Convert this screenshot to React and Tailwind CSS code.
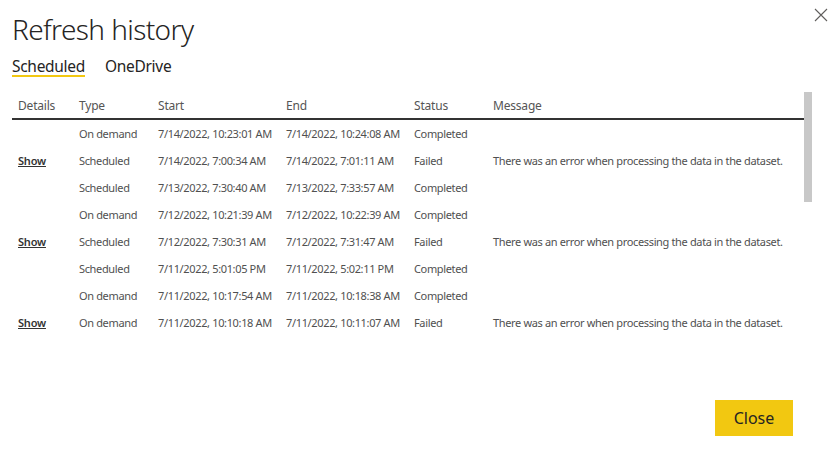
import React from "react";

const rows = [
  ["", "On demand", "7/14/2022, 10:23:01 AM", "7/14/2022, 10:24:08 AM", "Completed", ""],
  ["Show", "Scheduled", "7/14/2022, 7:00:34 AM", "7/14/2022, 7:01:11 AM", "Failed", "There was an error when processing the data in the dataset."],
  ["", "Scheduled", "7/13/2022, 7:30:40 AM", "7/13/2022, 7:33:57 AM", "Completed", ""],
  ["", "On demand", "7/12/2022, 10:21:39 AM", "7/12/2022, 10:22:39 AM", "Completed", ""],
  ["Show", "Scheduled", "7/12/2022, 7:30:31 AM", "7/12/2022, 7:31:47 AM", "Failed", "There was an error when processing the data in the dataset."],
  ["", "Scheduled", "7/11/2022, 5:01:05 PM", "7/11/2022, 5:02:11 PM", "Completed", ""],
  ["", "On demand", "7/11/2022, 10:17:54 AM", "7/11/2022, 10:18:38 AM", "Completed", ""],
  ["Show", "On demand", "7/11/2022, 10:10:18 AM", "7/11/2022, 10:11:07 AM", "Failed", "There was an error when processing the data in the dataset."],
];

const cols = ["w-[61px]", "w-[79px]", "w-[128px]", "w-[128px]", "w-[79px]", "flex-1"];
const heads = ["Details", "Type", "Start", "End", "Status", "Message"];

export default function App() {
  return (
    <div
      className="w-[835px] h-[450px] bg-white relative overflow-hidden text-[#252423]"
      style={{ fontFamily: '"Noto Sans", "Open Sans", sans-serif' }}
    >
      <button className="absolute left-[813px] top-[7px] w-[15px] h-[15px] flex items-center justify-center">
        <svg width="14" height="14" viewBox="0 0 14 14">
          <path d="M1 1 L13 13 M13 1 L1 13" stroke="#605e5c" strokeWidth="1.1" />
        </svg>
      </button>
      <div className="pl-[12px] pt-[10px] flex flex-col">
        <h1 className="text-[28px] leading-[38px] font-light tracking-[-0.6px]">Refresh history</h1>
        <div className="flex gap-[20px] mt-[9px] text-[15.5px] leading-[18px] tracking-[-0.3px]">
          <div className="border-b-2 border-[#f2c811] pb-0">Scheduled</div>
          <div>OneDrive</div>
        </div>
        <div className="flex mt-[15px]">
          <div className="w-[792px]">
            <div className="flex h-[28px] pt-[2px] items-center border-b-2 border-[#333333] text-[12px] text-[#555] tracking-[-0.2px]">
              {heads.map((h, i) => (
                <div key={h} className={`${cols[i]} pl-[6px]`}>{h}</div>
              ))}
            </div>
            {rows.map((r, ri) => (
              <div key={ri} className="flex h-[27px] pt-[2px] items-center text-[11px] text-[#505050] tracking-[-0.35px]">
                {r.map((c, i) => (
                  <div key={i} className={`${cols[i]} pl-[6px] whitespace-nowrap`}>
                    {i === 0 && c ? (
                      <span className="underline font-semibold text-[#333] tracking-[-0.2px]">{c}</span>
                    ) : (
                      c
                    )}
                  </div>
                ))}
              </div>
            ))}
          </div>
          <div className="w-[8px] h-[110px] bg-[#c8c8c8]" />
        </div>
      </div>
      <button className="absolute left-[715px] top-[400px] w-[78px] h-[36px] bg-[#f2c811] text-[16px] text-[#252423]">
        Close
      </button>
    </div>
  );
}
